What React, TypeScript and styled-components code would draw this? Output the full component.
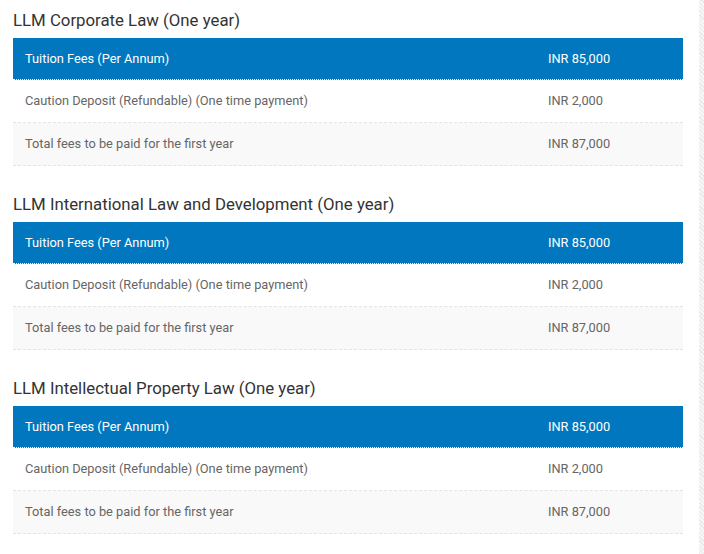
import styled, { createGlobalStyle } from 'styled-components';

const GlobalStyle = createGlobalStyle`
  html, body {
    margin: 0;
    padding: 0;
    background: #fff;
    font-family: Roboto, "Liberation Sans", Arial, sans-serif;
  }
`;

const Page = styled.div`
  display: flex;
  width: 704px;
  min-height: 554px;
`;

const Content = styled.div`
  flex: 1;
  padding: 0 16px 0 13px;
`;

const SideStrip = styled.div`
  width: 5px;
  background-color: #f2f2f2;
  background-image: repeating-linear-gradient(
    45deg,
    #e9e9e9 0 1px,
    #f6f6f6 1px 3px
  );
`;

const Section = styled.section`
  padding-top: 10px;
  margin-bottom: 18px;
`;

const Heading = styled.h3`
  margin: 0 0 8px;
  font-size: 16.8px;
  line-height: 20px;
  font-weight: 400;
  color: #333;
`;

const Table = styled.div`
  display: flex;
  flex-direction: column;
`;

const Row = styled.div<{ $variant: 'head' | 'plain' | 'alt' }>`
  display: grid;
  grid-template-columns: 523px 1fr;
  align-items: center;
  height: 41px;
  padding-bottom: ${(p) => (p.$variant === 'head' ? '0' : '1px')};
  background: ${(p) =>
    p.$variant === 'head' ? '#0077be' : p.$variant === 'alt' ? '#f9f9f9' : '#fff'};
  color: ${(p) => (p.$variant === 'head' ? '#fff' : '#666')};
  border-bottom: 1px ${(p) => (p.$variant === 'head' ? 'dotted #fff' : 'dashed #e4e4e4')};
  font-size: 12.8px;
`;

const Cell = styled.div`
  padding: 0 12px;
  white-space: nowrap;
`;

type Program = { title: string };

const programs: Program[] = [
  { title: 'LLM Corporate Law (One year)' },
  { title: 'LLM International Law and Development (One year)' },
  { title: 'LLM Intellectual Property Law (One year)' },
];

const FeeTable = () => (
  <Table>
    <Row $variant="head">
      <Cell>Tuition Fees (Per Annum)</Cell>
      <Cell>INR 85,000</Cell>
    </Row>
    <Row $variant="plain">
      <Cell>Caution Deposit (Refundable) (One time payment)</Cell>
      <Cell>INR 2,000</Cell>
    </Row>
    <Row $variant="alt">
      <Cell>Total fees to be paid for the first year</Cell>
      <Cell>INR 87,000</Cell>
    </Row>
  </Table>
);

const App = () => (
  <>
    <GlobalStyle />
    <Page>
      <Content>
        {programs.map((p) => (
          <Section key={p.title}>
            <Heading>{p.title}</Heading>
            <FeeTable />
          </Section>
        ))}
      </Content>
      <SideStrip />
    </Page>
  </>
);

export default App;
